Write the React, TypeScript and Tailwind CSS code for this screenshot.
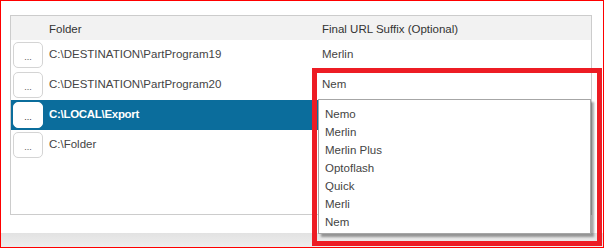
import React from "react";

type Row = { folder: string; suffix: string };

const rows: Row[] = [
	{ folder: "C:\\DESTINATION\\PartProgram19", suffix: "Merlin" },
	{ folder: "C:\\DESTINATION\\PartProgram20", suffix: "Nem" },
	{ folder: "C:\\LOCAL\\Export", suffix: "" },
	{ folder: "C:\\Folder", suffix: "" },
];

const options = ["Nemo", "Merlin", "Merlin Plus", "Optoflash", "Quick", "Merli", "Nem"];

function BrowseButton({ selected }: { selected: boolean }) {
	return (
		<div
			className={`ml-[2px] mr-[6px] w-[30px] h-[26px] rounded-[5px] border flex items-end justify-center pb-[5px] text-[9px] font-normal tracking-normal leading-none ${
				selected ? "bg-white border-white text-[#333]" : "bg-white border-[#d4d4d4] text-[#555]"
			}`}
		>
			...
		</div>
	);
}

export default function App() {
	const [selectedIndex] = React.useState<number>(2);

	return (
		<div
			className="relative w-[604px] h-[248px] border border-[#ff0000] bg-white flex flex-col overflow-hidden"
			style={{ fontFamily: '"Liberation Sans", Arial, sans-serif' }}
		>
			<div className="flex-1 pl-[9px] pt-[14px]">
				<div className="w-[582px] h-[200px] border border-[#cccccc] flex flex-col text-[11.5px]">
					{/* header */}
					<div className="h-[24px] bg-[#f2f2f2] flex items-center pt-[3px] text-[#333]">
						<div className="w-[307px] pl-[38px]">Folder</div>
						<div className="pl-[4px]">Final URL Suffix (Optional)</div>
					</div>
					{rows.map((row, i) => {
						const selected = i === selectedIndex;
						return (
							<div
								key={row.folder}
								className={`h-[30px] flex items-center ${
									selected ? "bg-[#0b6d9c] text-white font-bold tracking-[-0.3px]" : "text-[#444]"
								}`}
							>
								<div className="w-[307px] flex items-center">
									<BrowseButton selected={selected} />
									<span>{row.folder}</span>
								</div>
								<div className="pl-[4px]">{row.suffix}</div>
							</div>
						);
					})}
				</div>
			</div>
			<div className="h-[14px] bg-gradient-to-b from-[#e2e2e2] to-[#eeeeee]" />

			{/* autocomplete popup */}
			<div className="absolute left-[317px] top-[98px] w-[273px] h-[135px] bg-white border border-[#a6a6a6] shadow-[3px_3px_2px_rgba(0,0,0,0.35)] pt-[6px] pl-[6px] text-[11.5px] text-[#444]">
				{options.map((opt) => (
					<div key={opt} className="h-[18px] flex items-center">
						{opt}
					</div>
				))}
			</div>

			{/* annotation */}
			<div className="absolute left-[311px] top-[67px] w-[290px] h-[178px] border-[5px] border-[#ed1c24] pointer-events-none" />
		</div>
	);
}
